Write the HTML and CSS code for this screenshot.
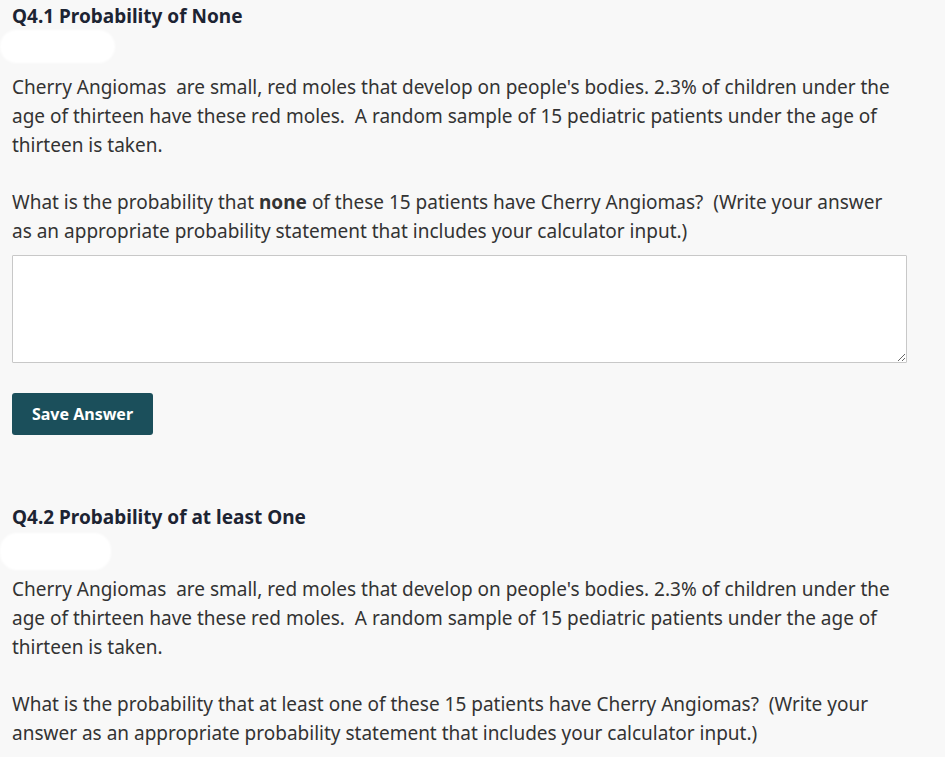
FILE: index.html
```html
<!DOCTYPE html>
<html lang="en">
<head>
<meta charset="utf-8">
<title>Quiz</title>
<link rel="stylesheet" href="styles.css">
</head>
<body>
<section class="question">
  <h2 class="q-title">Q4.1 Probability of None</h2>
  <div class="redact"></div>
  <p class="q-text">Cherry Angiomas&nbsp; are small, red moles that develop on people's bodies. 2.3% of children under the age of thirteen have these red moles.&nbsp; A random sample of 15 pediatric patients under the age of thirteen is taken.</p>
  <p class="q-text q-ask">What is the probability that <strong>none</strong> of these 15 patients have Cherry Angiomas?&nbsp; (Write your answer as an appropriate probability statement that includes your calculator input.)</p>
  <textarea class="answer"></textarea>
  <button class="save" type="button">Save Answer</button>
</section>
<section class="question second">
  <h2 class="q-title">Q4.2 Probability of at least One</h2>
  <div class="redact narrow"></div>
  <p class="q-text tight">Cherry Angiomas&nbsp; are small, red moles that develop on people's bodies. 2.3% of children under the age of thirteen have these red moles.&nbsp; A random sample of 15 pediatric patients under the age of thirteen is taken.</p>
  <p class="q-text q-ask">What is the probability that at least one of these 15 patients have Cherry Angiomas?&nbsp; (Write your answer as an appropriate probability statement that includes your calculator input.)</p>
</section>
</body>
</html>
```
FILE: styles.css
```css
html, body {
  margin: 0;
  padding: 0;
  background: #f8f8f8;
}
body {
  font-family: "Noto Sans", "Open Sans", sans-serif;
  color: #333333;
  padding: 4px 38px 0 12px;
  overflow: hidden;
}
.question {
  display: flex;
  flex-direction: column;
  align-items: flex-start;
}
.second {
  margin-top: 70px;
}
.q-title {
  margin: 0;
  font-size: 19px;
  line-height: 24px;
  font-weight: 700;
  color: #1d2433;
}
.redact {
  margin: 2px 0 0 -12px;
  width: 115px;
  height: 33px;
  border-radius: 17px;
  background: #ffffff;
  filter: blur(1px);
}
.redact.narrow {
  width: 111px;
  height: 37px;
  margin-top: 4px;
}
.q-text {
  margin: 10px 0 0;
  font-size: 19px;
  line-height: 29px;
}
.q-text.tight {
  margin-top: 5px;
}
.q-ask {
  margin-top: 28px;
}
.answer {
  margin: 9px 0 0;
  width: 895px;
  height: 108px;
  box-sizing: border-box;
  border: 1px solid #c8c8c8;
  border-radius: 1px;
  background: #ffffff;
  font: inherit;
}
.save {
  margin-top: 30px;
  width: 141px;
  height: 42px;
  border: none;
  border-radius: 3px;
  background: #1b4f5b;
  color: #ffffff;
  font-family: "Noto Sans", "Open Sans", sans-serif;
  font-size: 16px;
  font-weight: 700;
  padding: 0;
}
```
